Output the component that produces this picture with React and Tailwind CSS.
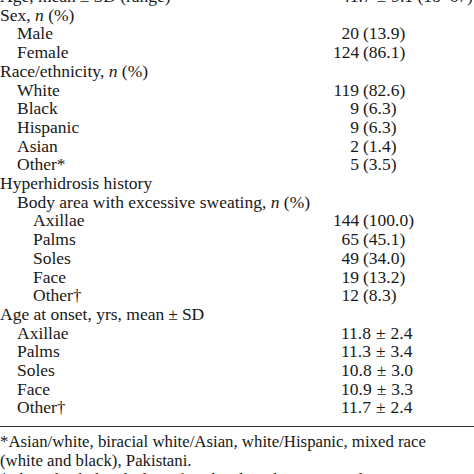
import React from "react";

const pm = <span className="px-[4px]">±</span>;

const rows = [
  { label: <>Age, mean{pm}SD (range)</>, lvl: 0, pm: "41.7 ± 9.1 (18–67)" },
  { label: <>Sex, <i>n</i> (%)</>, lvl: 0 },
  { label: "Male", lvl: 1, n: "20", p: "(13.9)" },
  { label: "Female", lvl: 1, n: "124", p: "(86.1)" },
  { label: <>Race/ethnicity, <i>n</i> (%)</>, lvl: 0 },
  { label: "White", lvl: 1, n: "119", p: "(82.6)" },
  { label: "Black", lvl: 1, n: "9", p: "(6.3)" },
  { label: "Hispanic", lvl: 1, n: "9", p: "(6.3)" },
  { label: "Asian", lvl: 1, n: "2", p: "(1.4)" },
  { label: "Other*", lvl: 1, n: "5", p: "(3.5)" },
  { label: "Hyperhidrosis history", lvl: 0 },
  { label: <>Body area with excessive sweating, <i>n</i> (%)</>, lvl: 1 },
  { label: "Axillae", lvl: 2, n: "144", p: "(100.0)" },
  { label: "Palms", lvl: 2, n: "65", p: "(45.1)" },
  { label: "Soles", lvl: 2, n: "49", p: "(34.0)" },
  { label: "Face", lvl: 2, n: "19", p: "(13.2)" },
  { label: "Other†", lvl: 2, n: "12", p: "(8.3)" },
  { label: <>Age at onset, yrs, mean{pm}SD</>, lvl: 0 },
  { label: "Axillae", lvl: 1, pm: "11.8 ± 2.4" },
  { label: "Palms", lvl: 1, pm: "11.3 ± 3.4" },
  { label: "Soles", lvl: 1, pm: "10.8 ± 3.0" },
  { label: "Face", lvl: 1, pm: "10.9 ± 3.3" },
  { label: "Other†", lvl: 1, pm: "11.7 ± 2.4" },
];

const indent = ["pl-0", "pl-[17px]", "pl-[33px]"];

function PM({ v }) {
  const [a, b] = v.split(" ± ");
  return (
    <span>
      {a}
      <span className="px-[5px]">±</span>
      {b}
    </span>
  );
}

export default function App() {
  return (
    <div
      className="w-[474px] h-[474px] overflow-hidden bg-white text-[#181818]"
      style={{ fontFamily: '"Liberation Serif", "Times New Roman", serif' }}
    >
      <div className="mt-[-13px] text-[17.5px] leading-[18.7px]">
        {rows.map((r, i) => (
          <div key={i} className="grid grid-cols-[333px_1fr] whitespace-nowrap">
            <div className={indent[r.lvl]}>{r.label}</div>
            <div>
              {r.n ? (
                <div className="flex">
                  <span className="w-[26px] text-right">{r.n}</span>
                  <span className="pl-[4px]">{r.p}</span>
                </div>
              ) : r.pm ? (
                <span className="pl-[8px]">
                  <PM v={r.pm} />
                </span>
              ) : null}
            </div>
          </div>
        ))}
      </div>
      <div className="mt-[9px] border-t-[1.5px] border-[#333]" />
      <div className="pt-[5px] text-[16.8px] leading-[19px] whitespace-nowrap">
        <div>*Asian/white, biracial white/Asian, white/Hispanic, mixed race</div>
        <div>(white and black), Pakistani.</div>
        <div>†Chest, back, hands, legs, feet, head, scalp, groin, and</div>
      </div>
    </div>
  );
}
